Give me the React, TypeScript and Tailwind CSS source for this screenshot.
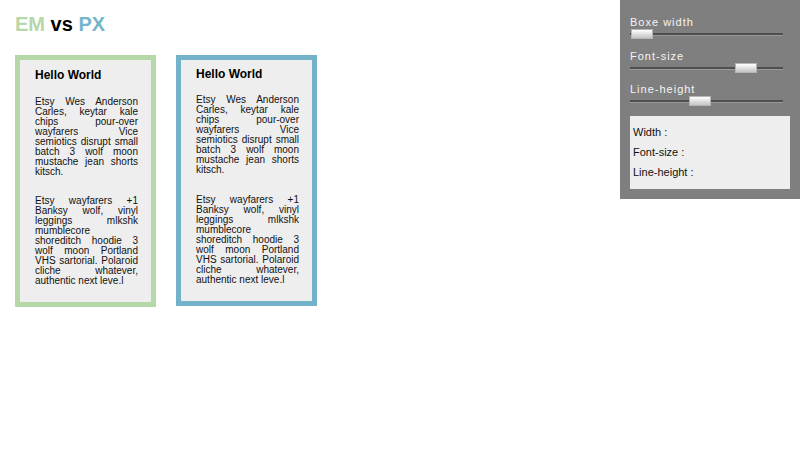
import React from "react";

const FIRST =
  "Etsy Wes Anderson Carles, keytar kale chips pour-over wayfarers Vice semiotics disrupt small batch 3 wolf moon mustache jean shorts kitsch.";
const SECOND =
  "Etsy wayfarers +1 Banksy wolf, vinyl leggings mlkshk mumblecore shoreditch hoodie 3 wolf moon Portland VHS sartorial. Polaroid cliche whatever, authentic next leve.l";

type BoxProps = { border: string; pt: string; m1: string; m2: string };

function Box({ border, pt, m1, m2 }: BoxProps) {
  return (
    <div className={`w-[141px] border-[5px] bg-[#eeeeee] pb-[16px] pl-[15px] pr-[13px] ${border} ${pt}`}>
      <h2 className="text-[12px] font-bold leading-[14px] text-black">Hello World</h2>
      <p className={`text-justify text-[10px] leading-[10px] text-[#111] ${m1}`}>{FIRST}</p>
      <p className={`text-justify text-[10px] leading-[10px] text-[#111] ${m2}`}>{SECOND}</p>
    </div>
  );
}

function Slider({ pos }: { pos: number }) {
  return (
    <div className="relative h-[10px] w-[153px]">
      <div className="absolute left-0 right-0 top-[4px] h-[2px] bg-[#4f4f4f]" />
      <div className="absolute left-0 right-0 top-[6px] h-[1px] bg-[#9a9a9a]" />
      <div
        className="absolute top-0 h-[10px] w-[22px] border border-[#b5b5b5] bg-gradient-to-b from-white to-[#c4c4c4]"
        style={{ left: pos }}
      />
    </div>
  );
}

function Control({ label, pos }: { label: string; pos: number }) {
  return (
    <div className="flex flex-col">
      <span className="text-[11px] leading-[14px] tracking-[1px] text-[#f5f5f5]">{label}</span>
      <Slider pos={pos} />
    </div>
  );
}

export default function App() {
  return (
    <div
      className="relative h-[450px] w-[800px] bg-white"
      style={{ fontFamily: '"Liberation Sans", Arial, sans-serif' }}
    >
      <div className="px-[15px] pt-[12px]">
        <h1 className="text-[20px] font-bold leading-[24px]">
          <span className="text-[#b6d7a8]">EM</span> <span className="text-black">vs</span>{" "}
          <span className="text-[#76b5c9]">PX</span>
        </h1>
        <div className="mt-[19px] flex items-start gap-[20px]">
          <Box border="border-[#b6d7a8]" pt="pt-[8px]" m1="mt-[15px]" m2="mt-[19px]" />
          <Box border="border-[#72b3cb]" pt="pt-[7px]" m1="mt-[14px]" m2="mt-[20px]" />
        </div>
      </div>

      {/* settings panel */}
      <div className="absolute right-0 top-0 flex h-[199px] w-[180px] flex-col bg-[#7f7f7f] px-[10px] pt-[15px]">
        <div className="flex flex-col gap-[9.5px]">
          <Control label="Boxe width" pos={1} />
          <Control label="Font-size" pos={105} />
          <Control label="Line-height" pos={59} />
        </div>
        <div className="mt-[10px] h-[73px] w-[160px] bg-[#eeeeee] px-[3px] pt-[6px] text-[11px] leading-[20px] text-[#111]">
          <div>Width :</div>
          <div>Font-size :</div>
          <div>Line-height :</div>
        </div>
      </div>
    </div>
  );
}
